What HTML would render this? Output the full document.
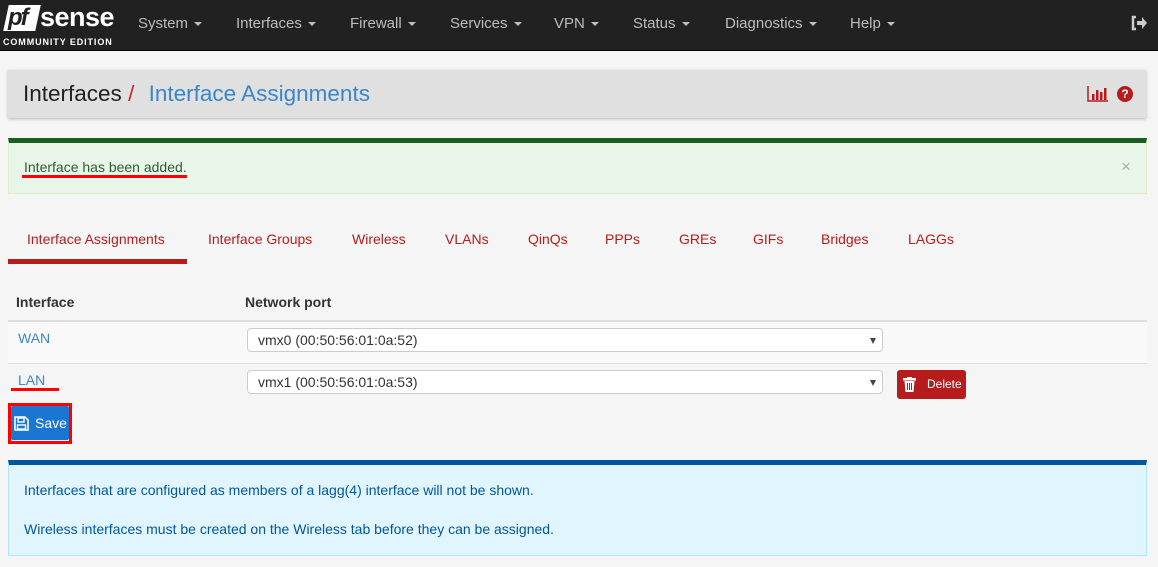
<!DOCTYPE html>
<html><head><meta charset="utf-8"><style>
*{box-sizing:border-box;margin:0;padding:0}
body{width:1158px;height:567px;overflow:hidden;background:#f5f5f5;font-family:"Liberation Sans",sans-serif;font-size:14px;color:#212121;position:relative}
.abs{position:absolute}
.nav{left:0;top:0;width:1158px;height:51px;background:#212121;border-bottom:1px solid #000}
.nav .m{top:15px;color:#bdbdbd;font-size:15px}
.caret{display:inline-block;border-left:4px solid transparent;border-right:4px solid transparent;border-top:4px solid #bdbdbd;vertical-align:middle;margin-left:6px}
.tab{top:231px;color:#b71c1c;font-size:14px}
.sel{left:247px;width:636px;height:24px;background:#fff;border:1px solid #ccc;border-radius:4px;font-size:14px;padding:3px 10px;color:#333}
.sel:after{content:"";position:absolute;right:6px;top:9px;border-left:3.5px solid transparent;border-right:3.5px solid transparent;border-top:6px solid #444}
</style></head><body>
<div class="abs nav">
 <div class="abs" style="left:6px;top:5px;width:32px;height:26px;background:#fff;transform:skewX(-12deg)"></div>
 <div class="abs" style="left:8px;top:4px;font:italic bold 24px 'Liberation Sans';color:#212121;letter-spacing:-2px">pf</div>
 <div class="abs" style="left:40px;top:2px;font:bold 27px 'Liberation Sans';color:#fff;letter-spacing:-0.5px">sense</div>
 <div class="abs" style="left:3px;top:37px;font:bold 9px 'Liberation Sans';color:#fff;letter-spacing:0.9px">COMMUNITY EDITION</div>
 <div class="abs m" style="left:138px">System<span class="caret"></span></div>
 <div class="abs m" style="left:236px">Interfaces<span class="caret"></span></div>
 <div class="abs m" style="left:350px">Firewall<span class="caret"></span></div>
 <div class="abs m" style="left:450px">Services<span class="caret"></span></div>
 <div class="abs m" style="left:554px">VPN<span class="caret"></span></div>
 <div class="abs m" style="left:633px">Status<span class="caret"></span></div>
 <div class="abs m" style="left:725px">Diagnostics<span class="caret"></span></div>
 <div class="abs m" style="left:850px">Help<span class="caret"></span></div>
 <svg class="abs" style="left:1130px;top:15px" width="18" height="16" viewBox="0 0 18 16"><path d="M6 2H3v12h3" fill="none" stroke="#ccc" stroke-width="2.5"/><path d="M7 6h5V2l5 6-5 6v-4H7z" fill="#ccc"/></svg>
</div>
<div class="abs" style="left:8px;top:70px;width:1138px;height:48px;background:#e0e0e0;box-shadow:0 1px 3px rgba(0,0,0,.25)">
 <div class="abs" style="left:15px;top:11px;font-size:22.5px;color:#212121;white-space:nowrap">Interfaces<span style="color:#c62828"> / </span><span style="color:#3a86c8;margin-left:8px">Interface Assignments</span></div>
 <svg class="abs" style="left:1079px;top:16px" width="22" height="16" viewBox="0 0 22 16"><path d="M1 0v15h20" fill="none" stroke="#b71c1c" stroke-width="1.5"/><rect x="5" y="8" width="2.5" height="6" fill="#b71c1c"/><rect x="9" y="4" width="2.5" height="10" fill="#b71c1c"/><rect x="13" y="6" width="2.5" height="8" fill="#b71c1c"/><rect x="17" y="2" width="2.5" height="12" fill="#b71c1c"/></svg>
 <div class="abs" style="left:1109px;top:16px;width:16px;height:16px;border-radius:50%;background:#b71c1c;color:#fff;font:bold 12px 'Liberation Sans';text-align:center;line-height:16px">?</div>
</div>
<div class="abs" style="left:8px;top:138px;width:1139px;height:56px;background:#e8f5e9;border-top:5px solid #1b5e20;border-left:1px solid #dcedc8;border-right:1px solid #dcedc8;border-bottom:1px solid #dcedc8">
 <div class="abs" style="left:15px;top:16px;color:#2e5e2e;font-size:14px">Interface has been added.</div>
 <div class="abs" style="left:1112px;top:14px;color:#aaa;font-size:17px">×</div>
</div>
<div class="abs" style="left:22px;top:175px;width:165px;height:3px;background:#f00"></div>
<div class="abs tab" style="left:27px">Interface Assignments</div>
<div class="abs tab" style="left:208px">Interface Groups</div>
<div class="abs tab" style="left:352px">Wireless</div>
<div class="abs tab" style="left:445px">VLANs</div>
<div class="abs tab" style="left:528px">QinQs</div>
<div class="abs tab" style="left:605px">PPPs</div>
<div class="abs tab" style="left:679px">GREs</div>
<div class="abs tab" style="left:753px">GIFs</div>
<div class="abs tab" style="left:821px">Bridges</div>
<div class="abs tab" style="left:908px">LAGGs</div>
<div class="abs" style="left:8px;top:259px;width:179px;height:5px;background:#b71c1c"></div>
<div class="abs" style="left:16px;top:294px;font-weight:bold;font-size:14px;color:#333">Interface</div>
<div class="abs" style="left:245px;top:294px;font-weight:bold;font-size:14px;color:#333">Network port</div>
<div class="abs" style="left:8px;top:320px;width:1139px;height:2px;background:#ddd"></div>
<div class="abs" style="left:8px;top:322px;width:1139px;height:41px;background:#f9f9f9"></div>
<div class="abs" style="left:8px;top:363px;width:1139px;height:1px;background:#ddd"></div>
<div class="abs" style="left:18px;top:330px;color:#3a86c8">WAN</div>
<div class="abs sel" style="top:328px">vmx0 (00:50:56:01:0a:52)</div>
<div class="abs" style="left:18px;top:372px;color:#3a86c8">LAN</div>
<div class="abs" style="left:11px;top:388px;width:48px;height:3px;background:#f00"></div>
<div class="abs sel" style="top:370px">vmx1 (00:50:56:01:0a:53)</div>
<div class="abs" style="left:897px;top:370px;width:69px;height:29px;background:#b71c1c;border-radius:3px;color:#fff;font-size:12px">
 <svg class="abs" style="left:6px;top:7px" width="13" height="15" viewBox="0 0 13 15"><rect x="0" y="1" width="13" height="2.5" fill="#fff"/><rect x="4" y="0" width="5" height="2" fill="#fff"/><path d="M1.5 4h10l-1 11h-8z" fill="#fff"/><path d="M4.5 6v7M6.5 6v7M8.5 6v7" stroke="#b71c1c" stroke-width="1"/></svg>
 <span class="abs" style="left:30px;top:7px">Delete</span>
</div>
<div class="abs" style="left:8px;top:403px;width:64px;height:41px;border:3px solid #f00"></div>
<div class="abs" style="left:11px;top:406px;width:58px;height:34px;background:#1976d2;border-radius:2px;color:#fff">
 <svg class="abs" style="left:3px;top:10px" width="15" height="15" viewBox="0 0 15 15"><path d="M1 1h10l3 3v10H1z" fill="none" stroke="#fff" stroke-width="1.6"/><rect x="4" y="2" width="6" height="4" fill="none" stroke="#fff" stroke-width="1.4"/><rect x="3.5" y="9" width="8" height="4" fill="none" stroke="#fff" stroke-width="1.4"/></svg>
 <span class="abs" style="left:24px;top:9px;font-size:14px">Save</span>
</div>
<div class="abs" style="left:8px;top:460px;width:1139px;height:96px;background:#e1f5fe;border-top:5px solid #01579b;border-left:1px solid #b3e5fc;border-right:1px solid #b3e5fc;border-bottom:1px solid #b3e5fc;color:#01579b;font-size:14px">
 <div class="abs" style="left:15px;top:17px">Interfaces that are configured as members of a lagg(4) interface will not be shown.</div>
 <div class="abs" style="left:15px;top:56px">Wireless interfaces must be created on the Wireless tab before they can be assigned.</div>
</div>
</body></html>
